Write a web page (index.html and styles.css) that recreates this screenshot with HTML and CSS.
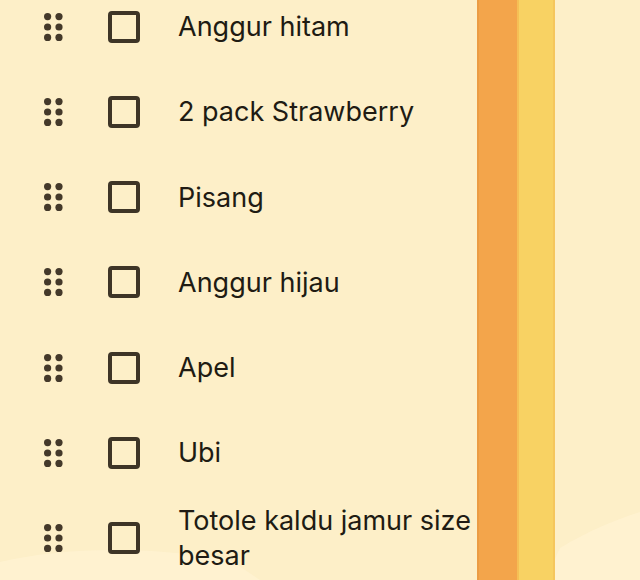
FILE: index.html
```html
<!DOCTYPE html>
<html lang="id">
<head>
<meta charset="utf-8">
<title>Daftar belanja</title>
<link rel="stylesheet" href="styles.css">
</head>
<body>
<div class="screen">
  <svg class="waves" width="640" height="580" viewBox="0 0 640 580" aria-hidden="true">
    <path d="M0 562 C 60 548, 140 545, 230 560 L 260 580 L 0 580 Z" fill="#fff3d2" opacity="0.8"/>
    <path d="M560 548 C 590 530, 615 520, 640 512 L 640 580 L 545 580 Z" fill="#fff3d2" opacity="0.8"/>
  </svg>
  <ul class="list">
    <li class="item"><svg class="handle" width="19" height="28" viewBox="0 0 19 28"><circle cx="3.6" cy="3.6" r="3.6"/><circle cx="15" cy="3.6" r="3.6"/><circle cx="3.6" cy="14" r="3.6"/><circle cx="15" cy="14" r="3.6"/><circle cx="3.6" cy="24.4" r="3.6"/><circle cx="15" cy="24.4" r="3.6"/></svg><span class="box"></span><span class="label">Anggur hitam</span></li>
    <li class="item"><svg class="handle" width="19" height="28" viewBox="0 0 19 28"><circle cx="3.6" cy="3.6" r="3.6"/><circle cx="15" cy="3.6" r="3.6"/><circle cx="3.6" cy="14" r="3.6"/><circle cx="15" cy="14" r="3.6"/><circle cx="3.6" cy="24.4" r="3.6"/><circle cx="15" cy="24.4" r="3.6"/></svg><span class="box"></span><span class="label">2 pack Strawberry</span></li>
    <li class="item"><svg class="handle" width="19" height="28" viewBox="0 0 19 28"><circle cx="3.6" cy="3.6" r="3.6"/><circle cx="15" cy="3.6" r="3.6"/><circle cx="3.6" cy="14" r="3.6"/><circle cx="15" cy="14" r="3.6"/><circle cx="3.6" cy="24.4" r="3.6"/><circle cx="15" cy="24.4" r="3.6"/></svg><span class="box"></span><span class="label">Pisang</span></li>
    <li class="item"><svg class="handle" width="19" height="28" viewBox="0 0 19 28"><circle cx="3.6" cy="3.6" r="3.6"/><circle cx="15" cy="3.6" r="3.6"/><circle cx="3.6" cy="14" r="3.6"/><circle cx="15" cy="14" r="3.6"/><circle cx="3.6" cy="24.4" r="3.6"/><circle cx="15" cy="24.4" r="3.6"/></svg><span class="box"></span><span class="label">Anggur hijau</span></li>
    <li class="item"><svg class="handle" width="19" height="28" viewBox="0 0 19 28"><circle cx="3.6" cy="3.6" r="3.6"/><circle cx="15" cy="3.6" r="3.6"/><circle cx="3.6" cy="14" r="3.6"/><circle cx="15" cy="14" r="3.6"/><circle cx="3.6" cy="24.4" r="3.6"/><circle cx="15" cy="24.4" r="3.6"/></svg><span class="box"></span><span class="label">Apel</span></li>
    <li class="item"><svg class="handle" width="19" height="28" viewBox="0 0 19 28"><circle cx="3.6" cy="3.6" r="3.6"/><circle cx="15" cy="3.6" r="3.6"/><circle cx="3.6" cy="14" r="3.6"/><circle cx="15" cy="14" r="3.6"/><circle cx="3.6" cy="24.4" r="3.6"/><circle cx="15" cy="24.4" r="3.6"/></svg><span class="box"></span><span class="label">Ubi</span></li>
    <li class="item"><svg class="handle" width="19" height="28" viewBox="0 0 19 28"><circle cx="3.6" cy="3.6" r="3.6"/><circle cx="15" cy="3.6" r="3.6"/><circle cx="3.6" cy="14" r="3.6"/><circle cx="15" cy="14" r="3.6"/><circle cx="3.6" cy="24.4" r="3.6"/><circle cx="15" cy="24.4" r="3.6"/></svg><span class="box"></span><span class="label">Totole kaldu jamur size besar</span></li>
  </ul>
  <div class="stripe orange"></div>
  <div class="stripe yellow"></div>
  <div class="rest"></div>
</div>
</body>
</html>
```

FILE: styles.css
```css
html, body {
  margin: 0;
  padding: 0;
  background: #fdefc8;
}
body {
  width: 640px;
  height: 580px;
  overflow: hidden;
}
.screen {
  position: relative;
  display: flex;
  width: 640px;
  height: 580px;
  overflow: hidden;
  background: #fdefc8;
  font-family: Inter, Roboto, "Noto Sans", sans-serif;
  color: #201b13;
}
.waves {
  position: absolute;
  left: 0;
  top: 0;
  z-index: 0;
}
.list {
  position: relative;
  z-index: 1;
  list-style: none;
  margin: -16px 0 0 0;
  padding: 0;
  width: 477px;
  flex: none;
}
.item {
  display: flex;
  align-items: center;
  min-height: 70px;
  padding: 7.625px 0 7.625px 44px;
}
.handle {
  flex: none;
  fill: #44392a;
}
.box {
  flex: none;
  width: 32px;
  height: 32px;
  box-sizing: border-box;
  border: 4px solid #3e3527;
  border-radius: 4px;
  margin-left: 45px;
}
.label {
  margin-left: 38px;
  font-size: 27px;
  line-height: 35px;
  flex: 1;
}
.stripe {
  position: relative;
  z-index: 1;
  flex: none;
  height: 100%;
  box-sizing: border-box;
}
.orange {
  width: 40px;
  background: #f3a54b;
  border-left: 2px solid #eb9c44;
}
.yellow {
  width: 38px;
  background: #f8d263;
  border-left: 2px solid #f6bf55;
  border-right: 2px solid #f5c65c;
}
.rest {
  flex: 1;
}
```
